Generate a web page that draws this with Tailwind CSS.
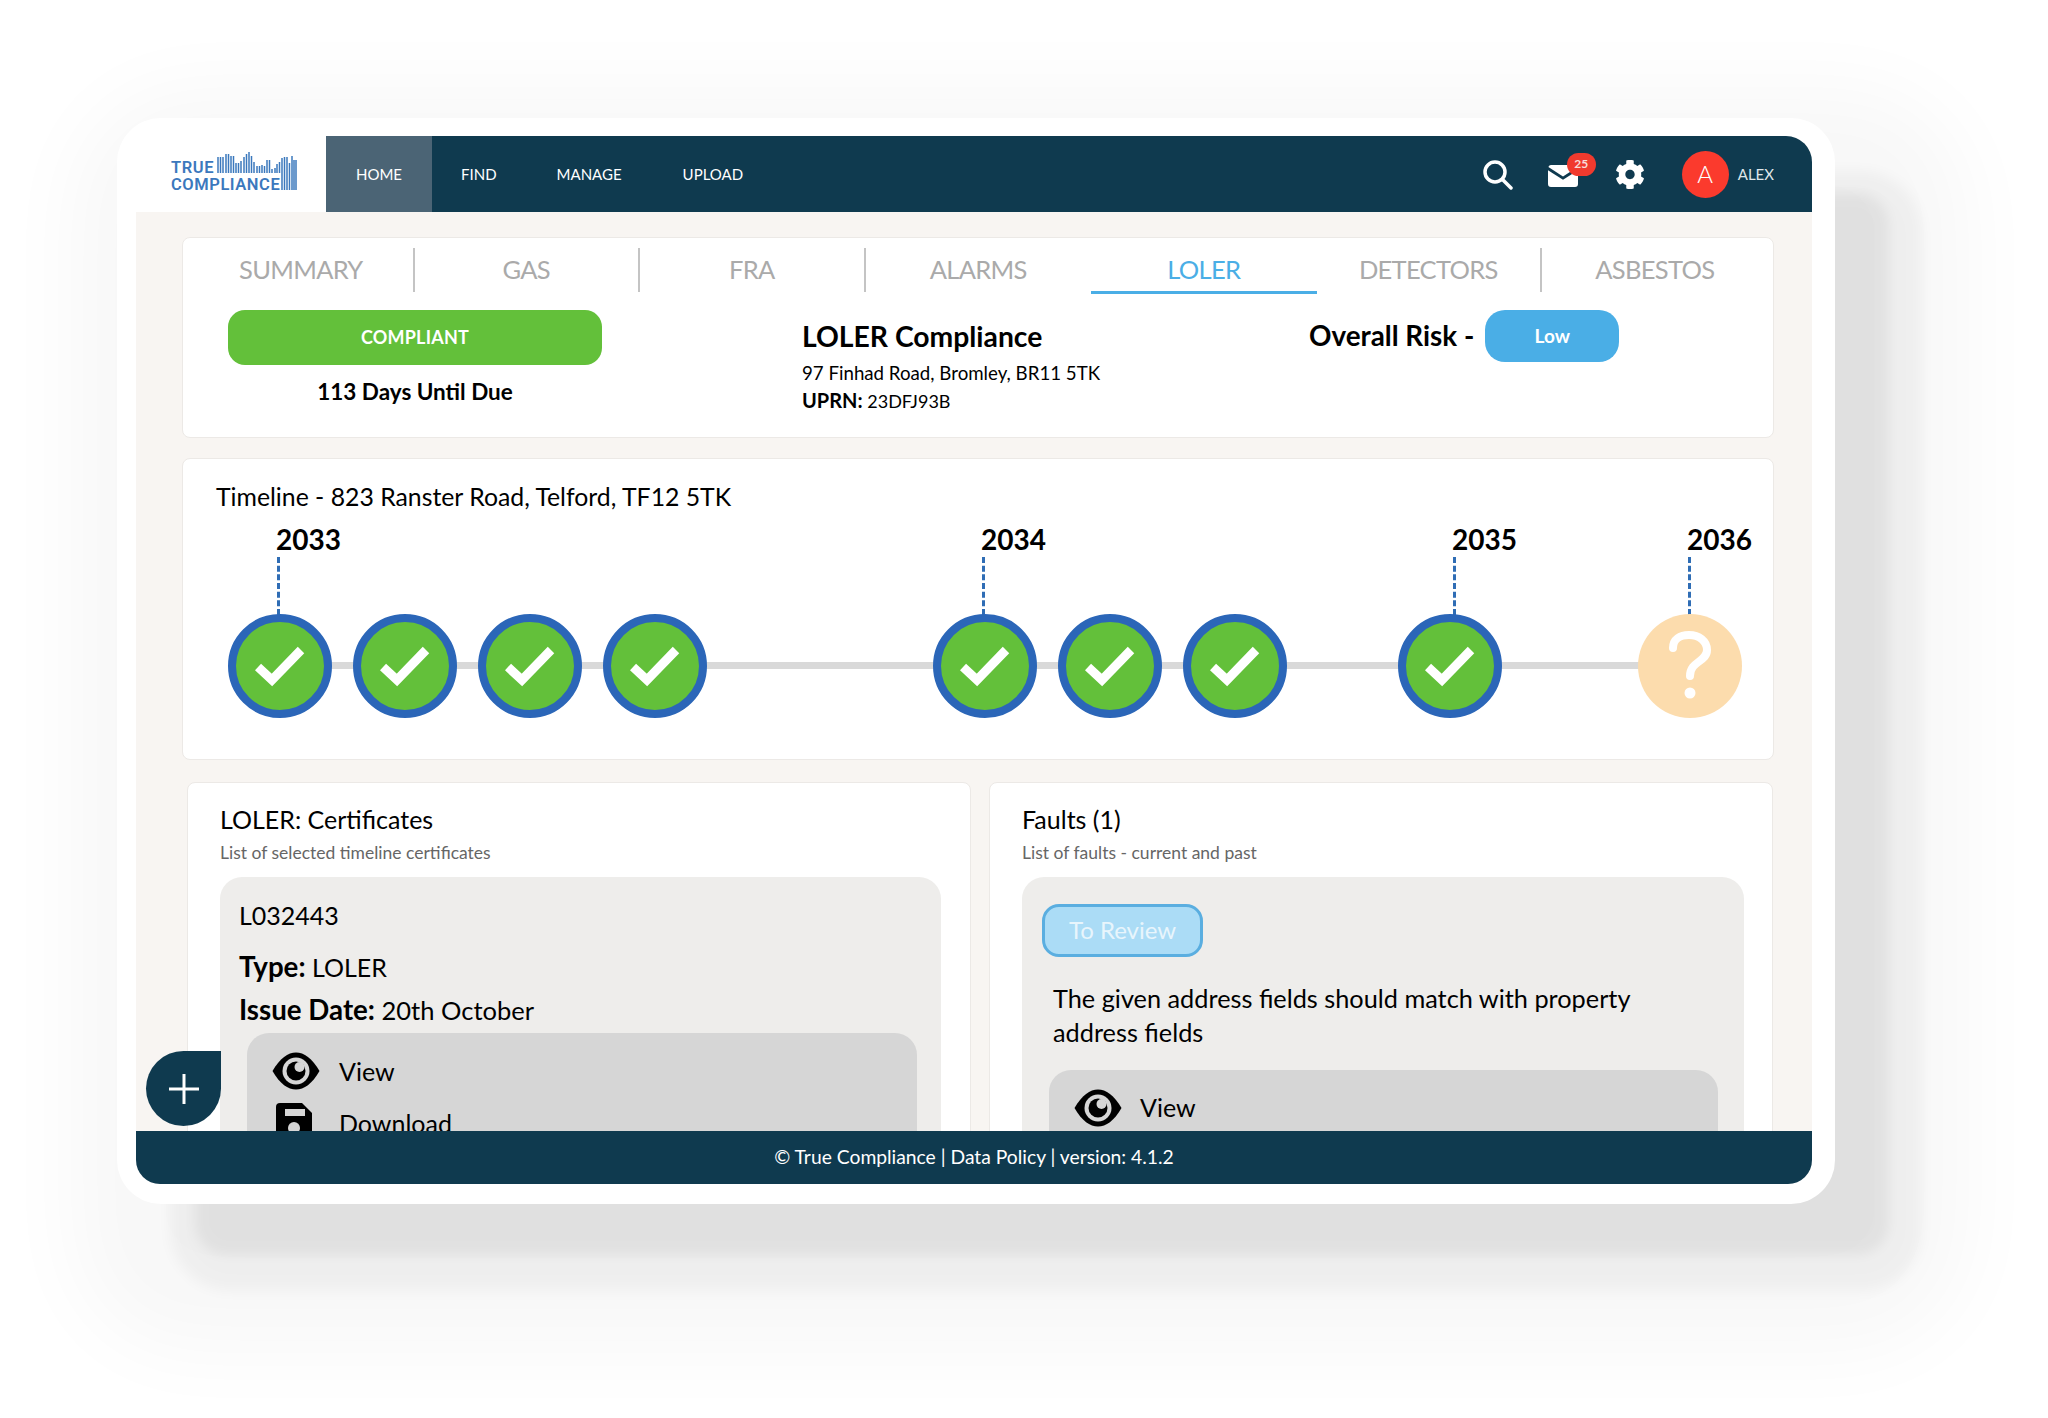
<!DOCTYPE html>
<html lang="en">
<head>
    <meta charset="utf-8">
    <title>True Compliance - LOLER</title>
    <script src="https://cdn.jsdelivr.net/npm/@tailwindcss/browser@4"></script>
</head>

<body class="bg-white font-['Lato','Liberation_Sans',sans-serif] text-black">
<div class="w-[2048px] h-[1418px] overflow-hidden pt-[118px] pl-[117px]">

    <!-- Device frame -->
    <div class="w-[1718px] h-[1086px] pl-[19px] pt-[18px] bg-white rounded-[44px] shadow-[66px_63px_12px_-12px_rgba(0,0,0,0.05),70px_70px_14px_17px_rgba(0,0,0,0.04),44px_59px_80px_90px_rgba(0,0,0,0.03)]">
        <div class="relative w-[1676px] h-[1048px] flex flex-col overflow-hidden rounded-tr-[26px] rounded-b-[24px] bg-[#f8f5f2]">

            <!-- Nav -->
            <header class="flex items-stretch h-[76px] shrink-0 bg-[#0f3a4f] text-white">
                <div class="w-[190px] bg-white flex pl-[35px] pt-[16px]">
                    <div class="relative w-[130px] h-[40px] text-[#3b78bd] font-['Roboto',sans-serif] font-semibold">
                        <div class="text-[16.5px] leading-[17px] pt-[7px] tracking-[0.6px]">TRUE</div>
                        <div class="text-[16.5px] leading-[17px] tracking-[0.55px]">COMPLIANCE</div>
                        <svg class="absolute left-[46px] top-0" width="80" height="38" viewBox="0 0 80 38" fill="none" stroke="#3b78bd" stroke-width="1.5">
                            <path d="M1 5V21M3.5 5V21M6 5V21M9 2V21M11.5 2V21M14 4V21M16.5 4V21M19 11V21M21.5 11V21M24 9V21M27 5V21M29.5 2V21M32 0V21M34.5 4V21M37 10V21M40 14V21M42.5 14V21M45 13V21M47.5 14V21M50 8V21M52.5 8V21M55 17V21M58 16V21M60 12V21M62.5 10V21M65 6V38M67.5 5V38M70 5V38M72.5 11V38M75 4V38M77 8V38M79 8V38"/>
                        </svg>
                    </div>
                </div>
                <nav class="flex items-center text-[15px]">
                    <a class="w-[106px] h-full flex items-center justify-center bg-[#4b6475]">HOME</a>
                    <a class="ml-[29px]">FIND</a>
                    <a class="ml-[60px]">MANAGE</a>
                    <a class="ml-[61px]">UPLOAD</a>
                </nav>
                <div class="ml-auto flex items-center pr-[38px]">
                    <svg class="mt-[2px]" width="30" height="30" viewBox="0 0 30 30" fill="none" stroke="white" stroke-width="3.500" stroke-linecap="round">
                        <circle cx="12" cy="12" r="10"/>
                        <path d="M19.5 19.5L28 28"/>
                    </svg>
                    <div class="relative ml-[35px] w-[30px] h-[22px] mt-[3px]">
                        <svg width="30" height="22" viewBox="0 0 30 22">
                            <path d="M3 0H27Q29 0 29.6 2L15 11.5L.4 2Q1 0 3 0Z" fill="white"/>
                            <path d="M0 5.2L15 14.8L30 5.2V19Q30 22 27 22H3Q0 22 0 19Z" fill="white"/>
                        </svg>
                        <span class="absolute left-[19px] top-[-12px] w-[29px] h-[23px] rounded-full bg-[#f03a2e] flex items-center justify-center text-[12px] font-bold text-[#f8dcd8]">25</span>
                    </div>
                    <svg class="ml-[37px]" width="30" height="31" viewBox="0 0 512 512" fill="white">
                        <path d="M487.4 315.7l-42.6-24.6c4.3-23.2 4.3-47 0-70.2l42.6-24.6c4.9-2.8 7.1-8.6 5.5-14-11.1-35.6-30-67.8-54.7-94.6-3.8-4.1-10-5.1-14.8-2.3L380.8 110c-17.9-15.4-38.5-27.3-60.8-35.1V25.8c0-5.6-3.9-10.5-9.4-11.7-36.7-8.2-74.3-7.8-109.2 0-5.5 1.2-9.4 6.1-9.4 11.7V75c-22.2 7.9-42.8 19.8-60.8 35.1L88.7 85.5c-4.9-2.8-11-1.9-14.8 2.3-24.7 26.7-43.6 58.9-54.7 94.6-1.7 5.4.6 11.2 5.5 14L67.3 221c-4.3 23.2-4.3 47 0 70.2l-42.6 24.6c-4.9 2.8-7.1 8.6-5.5 14 11.1 35.6 30 67.8 54.7 94.6 3.8 4.1 10 5.1 14.8 2.3l42.6-24.6c17.9 15.4 38.5 27.3 60.8 35.1v49.2c0 5.6 3.9 10.5 9.4 11.7 36.7 8.2 74.3 7.8 109.2 0 5.5-1.2 9.4-6.1 9.4-11.7v-49.2c22.2-7.9 42.8-19.8 60.8-35.1l42.6 24.6c4.9 2.8 11 1.9 14.8-2.3 24.7-26.7 43.6-58.9 54.7-94.6 1.5-5.5-.7-11.3-5.6-14.1zM256 336c-44.1 0-80-35.9-80-80s35.9-80 80-80 80 35.9 80 80-35.9 80-80 80z"/>
                    </svg>
                    <span class="ml-[37px] w-[47px] h-[47px] rounded-full bg-[#fb3a2d] flex items-center justify-center text-[24px] font-light">A</span>
                    <span class="ml-[9px] text-[15px] text-[#dfe6ea]">ALEX</span>
                </div>
            </header>

            <main class="flex-1 min-h-0 overflow-hidden pt-[25px] pl-[46px]">

                <!-- Tabs + status -->
                <section class="w-[1592px] h-[201px] bg-white rounded-lg border border-[#ece9e6]">
                    <div class="flex items-start pl-[6px] pt-[10px] h-[57px] text-[25.5px] leading-[42px] text-[#aaaaaa] text-center tracking-[-0.7px]">
                        <div class="w-[225.5px] h-[44px] border-r-2 border-[#c4c4c4]">SUMMARY</div>
                        <div class="w-[225.5px] h-[44px] border-r-2 border-[#c4c4c4]">GAS</div>
                        <div class="w-[225.5px] h-[44px] border-r-2 border-[#c4c4c4]">FRA</div>
                        <div class="w-[225.5px] h-[44px]">ALARMS</div>
                        <div class="w-[225.5px] h-[46px] border-b-[3px] border-[#4aaee6] text-[#4aaee6]">LOLER</div>
                        <div class="w-[225.5px] h-[44px] border-r-2 border-[#c4c4c4]">DETECTORS</div>
                        <div class="w-[225.5px] h-[44px]">ASBESTOS</div>
                    </div>
                    <div class="flex items-start pl-[45px] pt-[15px]">
                        <div class="w-[374px] text-center">
                            <div class="h-[55px] rounded-[17px] bg-[#63c03a] text-white font-bold text-[18px] flex items-center justify-center tracking-[0.2px]">COMPLIANT</div>
                            <div class="mt-[13px] text-[22.5px] leading-[28px] font-bold">113 Days Until Due</div>
                        </div>
                        <div class="w-[507px] ml-[200px] pt-[9px]">
                            <h1 class="text-[28.3px] leading-[34px] font-bold">LOLER Compliance</h1>
                            <p class="mt-[7px] text-[18.7px] leading-[26px]">97 Finhad Road, Bromley, BR11 5TK</p>
                            <p class="mt-px text-[18px] leading-[26px]"><b class="text-[20px]">UPRN:</b> 23DFJ93B</p>
                        </div>
                        <div class="flex items-center h-[52px]">
                            <span class="text-[27.8px] font-bold">Overall Risk -</span>
                            <span class="ml-[11px] w-[134px] h-[52px] rounded-[20px] bg-[#4aaee6] text-white font-bold text-[19px] flex items-center justify-center">Low</span>
                        </div>
                    </div>
                </section>

                <!-- Timeline -->
                <section class="mt-[20px] w-[1592px] h-[302px] bg-white rounded-lg border border-[#ece9e6]">
                    <h2 class="pl-[33px] pt-[22px] text-[24.8px] leading-[32px]">Timeline - 823 Ranster Road, Telford, TF12 5TK</h2>
                    <div class="flex ml-[93px] mt-[9px] text-[28px] leading-[34px] font-bold">
                        <div class="w-[705px]">2033<div class="ml-[1px] mt-px h-[58px] border-l-[3px] border-dashed border-[#2f6db5]"></div></div>
                        <div class="w-[471px]">2034<div class="ml-[1px] mt-px h-[58px] border-l-[3px] border-dashed border-[#2f6db5]"></div></div>
                        <div class="w-[235px]">2035<div class="ml-[1px] mt-px h-[58px] border-l-[3px] border-dashed border-[#2f6db5]"></div></div>
                        <div>2036<div class="ml-[1px] mt-px h-[58px] border-l-[3px] border-dashed border-[#2f6db5]"></div></div>
                    </div>
                    <div class="relative flex ml-[45px] -mt-px">
                        <div class="absolute left-[52px] top-[48px] w-[1410px] h-[7px] bg-[#d9d9d9]"></div>
                        <div class="relative w-[104px] h-[104px] rounded-full border-[8px] border-[#2b66b8] bg-[#63c03a] flex items-center justify-center"><svg width="50" height="42" viewBox="0 0 50 42" fill="none" stroke="white" stroke-width="9"><path d="M3 22L17 35L46 5"/></svg></div>
                        <div class="relative ml-[21px] w-[104px] h-[104px] rounded-full border-[8px] border-[#2b66b8] bg-[#63c03a] flex items-center justify-center"><svg width="50" height="42" viewBox="0 0 50 42" fill="none" stroke="white" stroke-width="9"><path d="M3 22L17 35L46 5"/></svg></div>
                        <div class="relative ml-[21px] w-[104px] h-[104px] rounded-full border-[8px] border-[#2b66b8] bg-[#63c03a] flex items-center justify-center"><svg width="50" height="42" viewBox="0 0 50 42" fill="none" stroke="white" stroke-width="9"><path d="M3 22L17 35L46 5"/></svg></div>
                        <div class="relative ml-[21px] w-[104px] h-[104px] rounded-full border-[8px] border-[#2b66b8] bg-[#63c03a] flex items-center justify-center"><svg width="50" height="42" viewBox="0 0 50 42" fill="none" stroke="white" stroke-width="9"><path d="M3 22L17 35L46 5"/></svg></div>
                        <div class="relative ml-[226px] w-[104px] h-[104px] rounded-full border-[8px] border-[#2b66b8] bg-[#63c03a] flex items-center justify-center"><svg width="50" height="42" viewBox="0 0 50 42" fill="none" stroke="white" stroke-width="9"><path d="M3 22L17 35L46 5"/></svg></div>
                        <div class="relative ml-[21px] w-[104px] h-[104px] rounded-full border-[8px] border-[#2b66b8] bg-[#63c03a] flex items-center justify-center"><svg width="50" height="42" viewBox="0 0 50 42" fill="none" stroke="white" stroke-width="9"><path d="M3 22L17 35L46 5"/></svg></div>
                        <div class="relative ml-[21px] w-[104px] h-[104px] rounded-full border-[8px] border-[#2b66b8] bg-[#63c03a] flex items-center justify-center"><svg width="50" height="42" viewBox="0 0 50 42" fill="none" stroke="white" stroke-width="9"><path d="M3 22L17 35L46 5"/></svg></div>
                        <div class="relative ml-[111px] w-[104px] h-[104px] rounded-full border-[8px] border-[#2b66b8] bg-[#63c03a] flex items-center justify-center"><svg width="50" height="42" viewBox="0 0 50 42" fill="none" stroke="white" stroke-width="9"><path d="M3 22L17 35L46 5"/></svg></div>
                        <div class="relative ml-[136px] w-[104px] h-[104px] rounded-full bg-[#fcdcad] flex items-center justify-center">
                            <svg width="44" height="70" viewBox="0 0 44 70" fill="none" stroke="white" stroke-width="8" stroke-linecap="round"><path d="M5 17C5 8 12 4 21 4C31 4 39 10 39 19C39 31 22 30 22 45"/><circle cx="22" cy="62" r="5.500" fill="white" stroke="none"/></svg>
                        </div>
                    </div>
                </section>

                <!-- Lower cards -->
                <div class="flex mt-[22px] ml-[5px] gap-[18px] items-start">
                    <section class="w-[784px] h-[400px] bg-white rounded-lg border border-[#ece9e6] pl-[32px] pt-[20px]">
                        <h2 class="text-[25px] leading-[32px]">LOLER: Certificates</h2>
                        <p class="mt-[6px] text-[17.5px] leading-[24px] text-[#666666]">List of selected timeline certificates</p>
                        <div class="mt-[12px] w-[721px] h-[400px] rounded-[22px] bg-[#eeedeb] pl-[19px] pt-[22px] text-[25.5px] leading-[32px]">
                            <div class="text-[25px]">L032443</div>
                            <div class="mt-[20px] text-[25px]"><b class="text-[27.7px]">Type:</b> LOLER</div>
                            <div class="mt-[11px]"><b class="text-[27.7px]">Issue Date:</b> 20th October</div>
                            <div class="mt-[7px] ml-[8px] w-[670px] h-[200px] rounded-[22px] bg-[#d6d6d6] pl-[25px] pt-[19px] text-[25px]">
                                <div class="flex items-center h-[38px]">
                                    <svg width="48" height="38" viewBox="0 0 48 38"><path d="M0.5 19C8 6 16 0.5 24 0.5C32 0.5 40 6 47.5 19C40 32 32 37.500 24 37.500C16 37.500 8 32 0.5 19Z" fill="black"/><circle cx="24" cy="19" r="13.500" fill="#d6d6d6"/><circle cx="24" cy="19" r="9.500" fill="black"/><circle cx="27.500" cy="15" r="5" fill="#d6d6d6"/></svg>
                                    <span class="ml-[19px]">View</span>
                                </div>
                                <div class="flex items-center mt-[14px] h-[38px]">
                                    <svg class="ml-[4px] -mt-[4px]" width="36" height="36" viewBox="0 0 36 36"><path d="M4 0H26L36 10V32Q36 36 32 36H4Q0 36 0 32V4Q0 0 4 0Z" fill="black"/><rect x="9" y="6" width="20" height="7" fill="#d6d6d6"/><circle cx="18" cy="25" r="6" fill="#d6d6d6"/></svg>
                                    <span class="ml-[27px] leading-[16px]">Download</span>
                                </div>
                            </div>
                        </div>
                    </section>
                    <section class="w-[784px] h-[400px] bg-white rounded-lg border border-[#ece9e6] pl-[32px] pt-[20px]">
                        <h2 class="text-[25px] leading-[32px]">Faults (1)</h2>
                        <p class="mt-[6px] text-[17.5px] leading-[24px] text-[#666666]">List of faults - current and past</p>
                        <div class="mt-[12px] w-[722px] h-[400px] rounded-[22px] bg-[#eeedeb] pl-[20px] pt-[27px] text-[25.3px]">
                            <div class="w-[161px] h-[53px] rounded-[17px] border-[3px] border-[#5aaee0] bg-[#abdcf6] text-[#e8f5fc] text-[24px] pb-[2px] flex items-center justify-center">To Review</div>
                            <p class="mt-[24px] ml-[11px] w-[650px] leading-[34px]">The given address fields should match with property address fields</p>
                            <div class="mt-[21px] ml-[7px] w-[669px] h-[200px] rounded-[22px] bg-[#d6d6d6] pl-[25px] pt-[19px] text-[25px]">
                                <div class="flex items-center h-[38px]">
                                    <svg width="48" height="38" viewBox="0 0 48 38"><path d="M0.5 19C8 6 16 0.5 24 0.5C32 0.5 40 6 47.5 19C40 32 32 37.500 24 37.500C16 37.500 8 32 0.5 19Z" fill="black"/><circle cx="24" cy="19" r="13.500" fill="#d6d6d6"/><circle cx="24" cy="19" r="9.500" fill="black"/><circle cx="27.500" cy="15" r="5" fill="#d6d6d6"/></svg>
                                    <span class="ml-[18px]">View</span>
                                </div>
                            </div>
                        </div>
                    </section>
                </div>
            </main>

            <footer class="h-[53px] shrink-0 bg-[#0f3a4f] text-white text-[19.3px] flex items-center justify-center">
                © True Compliance | Data Policy | version: 4.1.2
            </footer>

            <!-- Add button -->
            <button class="absolute left-[10px] top-[915px] w-[75px] h-[75px] rounded-full rounded-tr-[8px] bg-[#0f3a4f] flex items-center justify-center">
                <svg width="30" height="30" viewBox="0 0 30 30" stroke="white" stroke-width="3"><path d="M15 0V30M0 15H30"/></svg>
            </button>
        </div>
    </div>
</div>
</body>
</html>
